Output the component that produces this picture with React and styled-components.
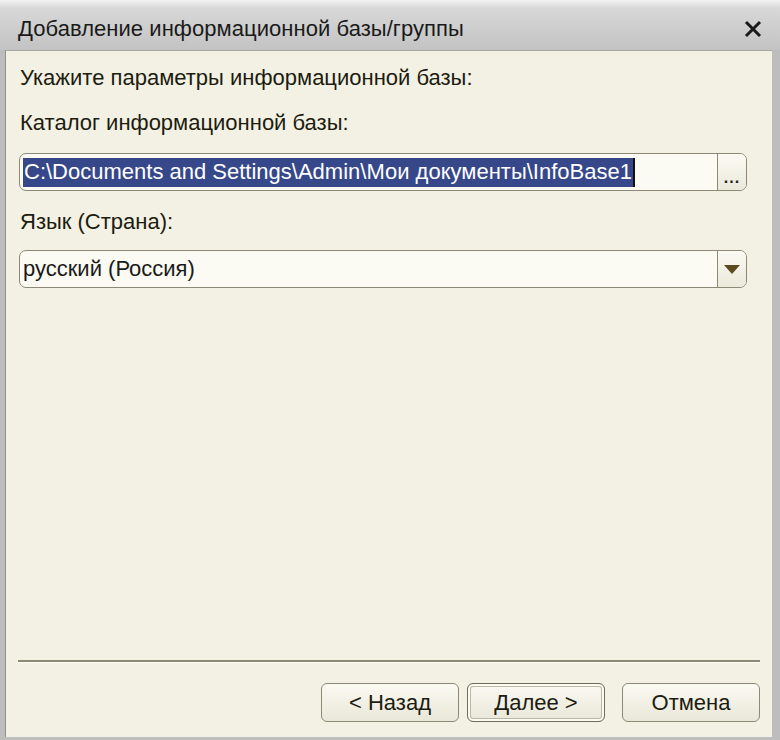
import React from "react";
import styled, { createGlobalStyle } from "styled-components";

const Global = createGlobalStyle`
  html, body {
    margin: 0;
    padding: 0;
    background: #ffffff;
  }
  body {
    font-family: "Liberation Sans", Arial, sans-serif;
  }
`;

const Window = styled.div`
  width: 780px;
  height: 740px;
  box-sizing: border-box;
  display: flex;
  flex-direction: column;
  background: linear-gradient(#f2f2f2, #d8d8d8 8px);
  padding-top: 8px;
`;

const TitleBar = styled.div`
  height: 42px;
  display: flex;
  align-items: center;
  justify-content: space-between;
  padding: 0 17px 0 18px;
  background: linear-gradient(#d8d8d8, #c3c3c3);
  color: #1a1a1a;
  font-size: 22px;
  letter-spacing: 0.05px;
`;

const CloseIcon = styled.svg`
  width: 20px;
  height: 20px;
`;

const Frame = styled.div`
  flex: 1;
  display: flex;
  background: #bdbdbd;
  padding: 0 8px 3px 5px;
`;

const Body = styled.div`
  flex: 1;
  display: flex;
  flex-direction: column;
  background: #f3f1e4;
  border-top: 1px solid #a8a8a0;
  border-left: 1px solid #909088;
  padding: 14px 12px 15px 13px;
`;

const Label = styled.div`
  font-size: 22px;
  line-height: 25px;
  color: #1c1c10;
  padding-left: 1px;
  margin-bottom: ${(p) => p.$gap || 0}px;
`;

const Field = styled.div`
  display: flex;
  height: 38px;
  box-sizing: border-box;
  border: 1px solid #8c8a76;
  border-radius: 7px;
  background: #fbfaf3;
  overflow: hidden;
  margin-right: 13px;
  margin-bottom: ${(p) => p.$gap || 0}px;
`;

const FieldText = styled.div`
  flex: 1;
  display: flex;
  align-items: center;
  padding-left: 3px;
  font-size: 22px;
  color: #1a1a1a;
`;

const Selected = styled.span`
  background: #37488a;
  color: #ffffff;
  padding: 1px 1px 2px 1px;
  border-right: 2px solid #111;
`;

const FieldButton = styled.div`
  width: 29px;
  border-left: 1px solid #8c8a76;
  background: linear-gradient(#fbfaf3, #ebe9db);
  display: flex;
  align-items: flex-end;
  justify-content: center;
  padding-bottom: 8px;
  box-sizing: border-box;
  ${(p) => p.$center && "align-items: center; padding-bottom: 0;"}
`;

const Dots = styled.span`
  font-size: 16px;
  font-weight: bold;
  letter-spacing: 1px;
  color: #222;
  line-height: 8px;
`;

const Spacer = styled.div`
  flex: 1;
`;

const Separator = styled.div`
  height: 2px;
  background: #8c8a76;
  border-bottom: 1px solid #fdfdf7;
  margin: 0 0 20px -1px;
`;

const ButtonRow = styled.div`
  display: flex;
  justify-content: flex-end;
  gap: 8px;
`;

const Button = styled.button`
  width: 138px;
  height: 39px;
  box-sizing: border-box;
  border: 1px solid #8c8a76;
  border-radius: 6px;
  background: linear-gradient(#fbfaf3, #e9e7d8);
  font-family: "Liberation Sans", Arial, sans-serif;
  font-size: 22px;
  color: #1c1c10;
  padding: 0;
  margin-left: ${(p) => p.$push || 0}px;
  ${(p) =>
    p.$default &&
    `
    border-color: #6e6c5a;
    box-shadow: inset 0 0 0 2px #fbfaf3, inset 0 0 0 3px #b8b6a4;
  `}
`;

export default function App() {
  return (
    <>
      <Global />
      <Window>
        <TitleBar>
          <span>Добавление информационной базы/группы</span>
          <CloseIcon viewBox="0 0 20 20">
            <path d="M3 3 L17 17 M17 3 L3 17" stroke="#1a1a1a" strokeWidth="3" />
          </CloseIcon>
        </TitleBar>
        <Frame>
          <Body>
            <Label $gap={20}>Укажите параметры информационной базы:</Label>
            <Label $gap={18}>Каталог информационной базы:</Label>
            <Field $gap={18}>
              <FieldText>
                <Selected>C:\Documents and Settings\Admin\Мои документы\InfoBase1</Selected>
              </FieldText>
              <FieldButton>
                <Dots>...</Dots>
              </FieldButton>
            </Field>
            <Label $gap={16}>Язык (Страна):</Label>
            <Field>
              <FieldText>русский (Россия)</FieldText>
              <FieldButton $center>
                <svg width="16" height="9" viewBox="0 0 16 9">
                  <path d="M0 0 H16 L8 9 Z" fill="#5b4a1e" />
                </svg>
              </FieldButton>
            </Field>
            <Spacer />
            <Separator />
            <ButtonRow>
              <Button>&lt; Назад</Button>
              <Button $default>Далее &gt;</Button>
              <Button $push={9}>Отмена</Button>
            </ButtonRow>
          </Body>
        </Frame>
      </Window>
    </>
  );
}
